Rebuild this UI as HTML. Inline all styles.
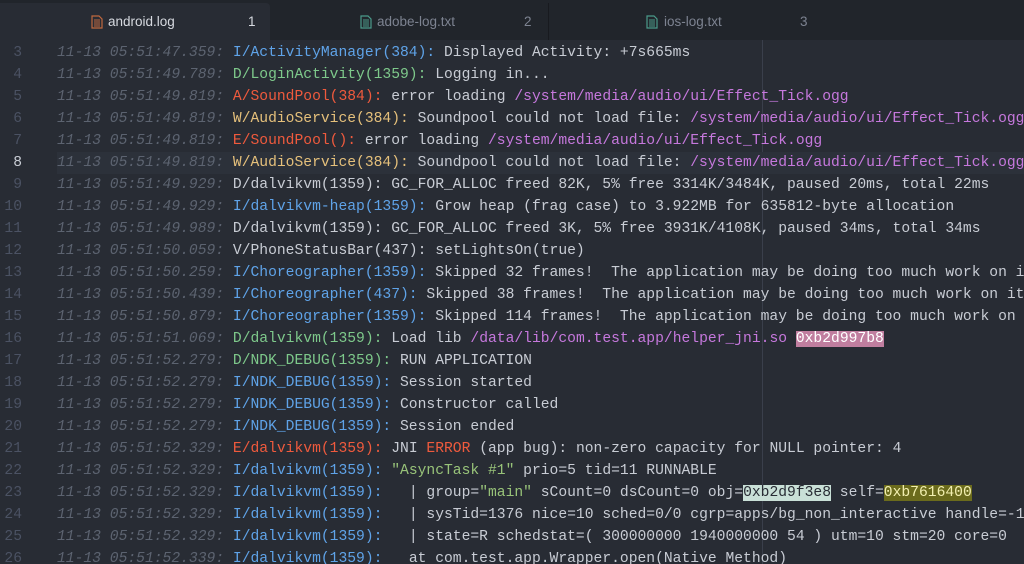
<!DOCTYPE html><html><head><style>
body{margin:0;width:1024px;height:564px;overflow:hidden;background:#282c34;font-family:"Liberation Mono",monospace;}
.tabs{position:absolute;left:0;top:0;width:1024px;height:40px;background:#21252b;font-family:"Liberation Sans",sans-serif;font-size:13.5px;}
.tab{position:absolute;top:3px;height:37px;line-height:37px;color:#7d8391;}
.tab.a{left:0;width:270px;background:#282c34;color:#d7dae0;border-radius:0 4px 0 0}
.tab svg{position:absolute;top:12px}
.num{position:absolute}
.div{position:absolute;left:548px;top:3px;width:1px;height:37px;background:#181a1f}
.ed{position:absolute;top:42px;left:0;width:1024px;height:522px;overflow:hidden;font-size:14.67px;}
.row{height:22px;line-height:22px;white-space:pre;position:relative;color:#c8ccd4;overflow:hidden}
.row.hl .g{color:#c8ccd4}
.g{position:absolute;left:0;width:22px;text-align:right;color:#4b5263}
.c{position:absolute;left:57px}
.t{color:#5c6370;font-style:italic}
.I{color:#5fa3e8}.D{color:#7ec98b}.E{color:#ef5a3d}.W{color:#e5c07b}
.p{color:#c678dd}.s{color:#98c379}
.guide{position:absolute;left:762px;top:40px;width:1px;height:524px;background:#3a3f4b}
</style></head><body>
<div class="tabs">
<div class="tab a"><svg style="left:91px" width="12" height="14" viewBox="0 0 12 14"><path d="M1 1h7l3 3v9H1z" fill="none" stroke="#c0683f" stroke-width="1.2"/><path d="M3 5h6M3 7h6M3 9h6M3 11h6" stroke="#c0683f"/></svg><span style="position:absolute;left:108px">android.log</span><span class="num" style="left:248px">1</span></div>
<div class="tab" style="left:271px;width:277px"><svg style="left:89px" width="12" height="14" viewBox="0 0 12 14"><path d="M1 1h7l3 3v9H1z" fill="none" stroke="#4a9a8a" stroke-width="1.2"/><path d="M3 5h6M3 7h6M3 9h6M3 11h6" stroke="#4a9a8a"/></svg><span style="position:absolute;left:106px">adobe-log.txt</span><span class="num" style="left:253px">2</span></div>
<div class="div"></div>
<div class="tab" style="left:549px;width:475px"><svg style="left:97px" width="12" height="14" viewBox="0 0 12 14"><path d="M1 1h7l3 3v9H1z" fill="none" stroke="#4a9a8a" stroke-width="1.2"/><path d="M3 5h6M3 7h6M3 9h6M3 11h6" stroke="#4a9a8a"/></svg><span style="position:absolute;left:115px">ios-log.txt</span><span class="num" style="left:251px">3</span></div>
</div>
<div class="guide"></div>
<div class="ed">
<div class="row"><span class="g">3</span><span class="c"><span class="t">11-13 05:51:47.359: </span><span class="I">I/ActivityManager(384): </span>Displayed Activity: +7s665ms</span></div>
<div class="row"><span class="g">4</span><span class="c"><span class="t">11-13 05:51:49.789: </span><span class="D">D/LoginActivity(1359): </span>Logging in...</span></div>
<div class="row"><span class="g">5</span><span class="c"><span class="t">11-13 05:51:49.819: </span><span class="E">A/SoundPool(384): </span>error loading <span class="p">/system/media/audio/ui/Effect_Tick.ogg</span></span></div>
<div class="row"><span class="g">6</span><span class="c"><span class="t">11-13 05:51:49.819: </span><span class="W">W/AudioService(384): </span>Soundpool could not load file: <span class="p">/system/media/audio/ui/Effect_Tick.ogg</span></span></div>
<div class="row"><span class="g">7</span><span class="c"><span class="t">11-13 05:51:49.819: </span><span class="E">E/SoundPool(): </span>error loading <span class="p">/system/media/audio/ui/Effect_Tick.ogg</span></span></div>
<div class="row hl" style="background:linear-gradient(90deg,#282c34 57px,#2c313a 57px)"><span class="g">8</span><span class="c"><span class="t">11-13 05:51:49.819: </span><span class="W">W/AudioService(384): </span>Soundpool could not load file: <span class="p">/system/media/audio/ui/Effect_Tick.ogg</span></span></div>
<div class="row"><span class="g">9</span><span class="c"><span class="t">11-13 05:51:49.929: </span>D/dalvikvm(1359): GC_FOR_ALLOC freed 82K, 5% free 3314K/3484K, paused 20ms, total 22ms</span></div>
<div class="row"><span class="g">10</span><span class="c"><span class="t">11-13 05:51:49.929: </span><span class="I">I/dalvikvm-heap(1359): </span>Grow heap (frag case) to 3.922MB for 635812-byte allocation</span></div>
<div class="row"><span class="g">11</span><span class="c"><span class="t">11-13 05:51:49.989: </span>D/dalvikvm(1359): GC_FOR_ALLOC freed 3K, 5% free 3931K/4108K, paused 34ms, total 34ms</span></div>
<div class="row"><span class="g">12</span><span class="c"><span class="t">11-13 05:51:50.059: </span>V/PhoneStatusBar(437): setLightsOn(true)</span></div>
<div class="row"><span class="g">13</span><span class="c"><span class="t">11-13 05:51:50.259: </span><span class="I">I/Choreographer(1359): </span>Skipped 32 frames!  The application may be doing too much work on i</span></div>
<div class="row"><span class="g">14</span><span class="c"><span class="t">11-13 05:51:50.439: </span><span class="I">I/Choreographer(437): </span>Skipped 38 frames!  The application may be doing too much work on it</span></div>
<div class="row"><span class="g">15</span><span class="c"><span class="t">11-13 05:51:50.879: </span><span class="I">I/Choreographer(1359): </span>Skipped 114 frames!  The application may be doing too much work on</span></div>
<div class="row"><span class="g">16</span><span class="c"><span class="t">11-13 05:51:51.069: </span><span class="D">D/dalvikvm(1359): </span>Load lib <span class="p">/data/lib/com.test.app/helper_jni.so</span> <span style="background:#c07e9f;color:#fff">0xb2d997b8</span></span></div>
<div class="row"><span class="g">17</span><span class="c"><span class="t">11-13 05:51:52.279: </span><span class="D">D/NDK_DEBUG(1359): </span>RUN APPLICATION</span></div>
<div class="row"><span class="g">18</span><span class="c"><span class="t">11-13 05:51:52.279: </span><span class="I">I/NDK_DEBUG(1359): </span>Session started</span></div>
<div class="row"><span class="g">19</span><span class="c"><span class="t">11-13 05:51:52.279: </span><span class="I">I/NDK_DEBUG(1359): </span>Constructor called</span></div>
<div class="row"><span class="g">20</span><span class="c"><span class="t">11-13 05:51:52.279: </span><span class="I">I/NDK_DEBUG(1359): </span>Session ended</span></div>
<div class="row"><span class="g">21</span><span class="c"><span class="t">11-13 05:51:52.329: </span><span class="E">E/dalvikvm(1359): </span>JNI <span class="E">ERROR</span> (app bug): non-zero capacity for NULL pointer: 4</span></div>
<div class="row"><span class="g">22</span><span class="c"><span class="t">11-13 05:51:52.329: </span><span class="I">I/dalvikvm(1359): </span><span class="s">"AsyncTask #1"</span> prio=5 tid=11 RUNNABLE</span></div>
<div class="row"><span class="g">23</span><span class="c"><span class="t">11-13 05:51:52.329: </span><span class="I">I/dalvikvm(1359): </span>  | group=<span class="s">"main"</span> sCount=0 dsCount=0 obj=<span style="background:#c9e0d7;color:#282c34">0xb2d9f3e8</span> self=<span style="background:#6b6b1c;color:#f3f0b0">0xb7616400</span></span></div>
<div class="row"><span class="g">24</span><span class="c"><span class="t">11-13 05:51:52.329: </span><span class="I">I/dalvikvm(1359): </span>  | sysTid=1376 nice=10 sched=0/0 cgrp=apps/bg_non_interactive handle=-1</span></div>
<div class="row"><span class="g">25</span><span class="c"><span class="t">11-13 05:51:52.329: </span><span class="I">I/dalvikvm(1359): </span>  | state=R schedstat=( 300000000 1940000000 54 ) utm=10 stm=20 core=0</span></div>
<div class="row"><span class="g">26</span><span class="c"><span class="t">11-13 05:51:52.339: </span><span class="I">I/dalvikvm(1359): </span>  at com.test.app.Wrapper.open(Native Method)</span></div>
</div>
</body></html>
